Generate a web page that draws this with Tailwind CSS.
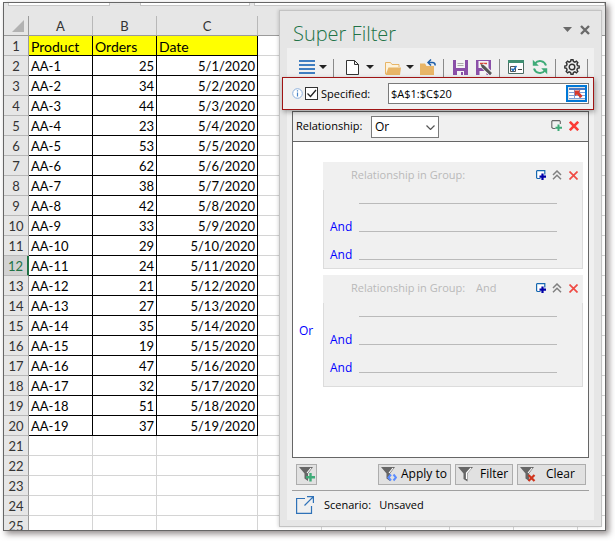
<!DOCTYPE html>
<html lang="en">
<head>
    <meta charset="UTF-8">
    <meta name="viewport" content="width=device-width, initial-scale=1.0">
    <title>Super Filter</title>
    <script src="https://cdn.jsdelivr.net/npm/@tailwindcss/browser@4"></script>
</head>
<body class="bg-white text-black font-['Open_Sans','Noto_Sans',sans-serif]">
    <div class="h-screen pt-[2px] pl-[3px] pr-[9px] pb-[10px]">
        <div class="relative h-full overflow-hidden border border-[#666] bg-white shadow-[3px_3px_6px_rgba(60,50,50,0.55)]">
            <!-- Formula bar edge -->
            <div class="flex h-[13px] items-start gap-1 bg-[#e6e6e6] pl-1">
                <div class="h-[3px] w-[102px] border border-t-0 border-[#c6c6c6] bg-white"></div>
                <div class="ml-[26px] h-[3px] w-[110px] border border-t-0 border-[#c6c6c6] bg-white"></div>
                <div class="h-[3px] flex-1 border border-t-0 border-[#c6c6c6] bg-white"></div>
            </div>

            <!-- Sheet -->
            <table class="w-[638px] table-fixed border-separate border-spacing-0 text-[13px] leading-[17px] font-['Lato',sans-serif]">
                <colgroup>
                    <col class="w-[25px]"><col class="w-[64px]"><col class="w-[64px]"><col class="w-[101px]">
                    <col class="w-[64px]"><col class="w-[64px]"><col class="w-[64px]"><col class="w-[64px]"><col class="w-[64px]"><col class="w-[64px]">
                </colgroup>
                <thead>
                    <tr class="h-5 bg-[#e6e6e6] text-[#333]">
                        <th class="border-r border-b border-[#9b9b9b] p-0">
                            <svg class="ml-auto mr-1 size-3" viewBox="0 0 12 12"><path d="M12 0v12H0z" fill="#b2b2b2"/></svg>
                        </th>
                        <th class="border-r border-b border-r-[#b8b8b8] border-b-[#9b9b9b] p-0 pt-[2px] font-normal">A</th>
                        <th class="border-r border-b border-r-[#b8b8b8] border-b-[#9b9b9b] p-0 pt-[2px] font-normal">B</th>
                        <th class="border-r border-b border-r-[#b8b8b8] border-b-[#9b9b9b] p-0 pt-[2px] font-normal">C</th>
                        <th class="border-b border-[#9b9b9b] p-0" colspan="6"></th>
                    </tr>
                </thead>
                <tbody id="sheetBody"></tbody>
            </table>

            <!-- Task pane -->
            <div class="absolute top-[7px] right-[3px] bottom-[3px] flex w-[323px] flex-col border border-[#c3c3c3] bg-[#e6e6e6] pr-[7px] pb-[6px] pl-[7px] text-[12px] leading-4 shadow-[-1px_0_3px_rgba(0,0,0,0.15)]">
                <div class="flex h-[37px] items-center pl-[6px]">
                    <h1 class="flex-1 pt-2 text-[20px] leading-7 font-light text-[#217346]">Super Filter</h1>
                    <button aria-label="Pane options" class="mr-2"><svg class="h-[5px] w-[9px]" viewBox="0 0 9 5"><path d="M0 0h9L4.500 5z" fill="#6a6a6a"/></svg></button>
                    <button aria-label="Close pane" class="mr-1"><svg class="size-[10px]" viewBox="0 0 10 10"><path d="M1 1l8 8M9 1L1 9" stroke="#6a6a6a" stroke-width="2.400"/></svg></button>
                </div>

                <div class="flex flex-1 flex-col bg-[#f0f0f0]">
                    <!-- Toolbar -->
                    <div class="flex h-[29px] shrink-0 items-end pl-3">
                        <button aria-label="Menu" class="flex h-5 items-center gap-1">
                            <svg class="size-4" viewBox="0 0 16 16"><path d="M0 2h16M0 6h16M0 10h16M0 14h16" stroke="#3f7dc0" stroke-width="2"/></svg>
                            <svg class="h-1 w-2" viewBox="0 0 8 4"><path d="M0 0h8L4 4z" fill="#222"/></svg>
                        </button>
                        <div class="ml-[6px] h-[18px] w-px bg-[#8a8a8a]"></div>
                        <button aria-label="New" class="ml-[10px] flex h-5 items-center gap-[6px]">
                            <svg class="size-4" viewBox="0 0 16 16"><path d="M2.500 1.500h8l4 4v10h-12zM10.500 1.500v4h4" fill="#fff" stroke="#333"/></svg>
                            <svg class="h-1 w-2" viewBox="0 0 8 4"><path d="M0 0h8L4 4z" fill="#222"/></svg>
                        </button>
                        <button aria-label="Open" class="ml-[11px] flex h-5 items-center gap-[5px]">
                            <svg class="size-4" viewBox="0 0 16 16"><path d="M.5 15V3.500h5l1.500 2h7V8" fill="#fdf3dd" stroke="#e8b567"/><path d="M3.500 8.500H16L15 16H.5z" fill="#e8b567"/></svg>
                            <svg class="h-1 w-2" viewBox="0 0 8 4"><path d="M0 0h8L4 4z" fill="#222"/></svg>
                        </button>
                        <button aria-label="Restore" class="ml-[6px] flex h-5 items-center">
                            <svg class="size-4" viewBox="0 0 16 16"><path d="M0 4.500h5L6.500 7H14v9H0z" fill="#e8b567"/><path d="M8.500 3.500h4c1.800 0 2.700 1 2.700 3" fill="none" stroke="#1f5fa8" stroke-width="1.500"/><path d="M11 .5L8 3.500l3 3" fill="none" stroke="#1f5fa8" stroke-width="1.500"/></svg>
                        </button>
                        <div class="ml-[7px] h-[18px] w-px bg-[#8a8a8a]"></div>
                        <button aria-label="Save" class="ml-[9px] flex h-5 items-center">
                            <svg class="size-4" viewBox="0 0 16 16"><path d="M0 1h15v15H0z" fill="#8a4fa8"/><path d="M3 1h9v8H3z" fill="#f4f4f4"/><path d="M4.500 4.500h6M4.500 6.500h6" stroke="#aaa"/><path d="M4 12h7v4H4z" fill="#f4f4f4"/><path d="M8 13h2v3H8z" fill="#8a4fa8"/></svg>
                        </button>
                        <button aria-label="Save as" class="ml-[7px] flex h-5 items-center">
                            <svg class="size-4" viewBox="0 0 16 16"><path d="M0 1h15v15H0z" fill="#8a4fa8"/><path d="M2.500 2h10v7h-10z" fill="#f4f4f4"/><path d="M4 4.500h7" stroke="#d9483b" stroke-width="1.500"/><path d="M3.500 12h7v4h-7z" fill="#f4f4f4"/><path d="M6 6l9 9" stroke="#f4f4f4" stroke-width="5"/><path d="M5 5.500l3 1L15.500 14 14 15.800 6.200 8.500z" fill="#555" stroke="#444" stroke-width=".6"/></svg>
                        </button>
                        <div class="ml-[7px] h-[18px] w-px bg-[#8a8a8a]"></div>
                        <button aria-label="Options" class="ml-2 flex h-5 items-center">
                            <svg class="size-4" viewBox="0 0 16 16"><path d="M.5 1.500h15v13H.5z" fill="#fff" stroke="#4d6b63"/><path d="M0 1h16v3H0z" fill="#3f8f72"/><path d="M2.500 7.500h5v5h-5z" fill="none" stroke="#555"/><path d="M3.500 9.500l1.500 2 3.500-4.500" fill="none" stroke="#1f6fc0" stroke-width="1.400"/><path d="M10 10.500h4" stroke="#444"/></svg>
                        </button>
                        <button aria-label="Refresh" class="ml-2 flex h-5 items-center">
                            <svg class="size-4" viewBox="0 0 16 16"><path d="M14 6.500C12.500 1.500 6 .5 3 4.500M2 9.500c1.500 5 8 6 11 2" fill="none" stroke="#3fab78" stroke-width="2"/><path d="M.8.8v6h6zM15.200 15.200v-6h-6z" fill="#3fab78"/></svg>
                        </button>
                        <div class="ml-[7px] h-[18px] w-px bg-[#8a8a8a]"></div>
                        <button aria-label="Settings" class="ml-2 flex h-5 items-center">
                            <svg class="size-4" viewBox="0 0 16 16" fill="none" stroke="#333" stroke-width="1.400"><path d="M6.600 2.500L7 .8h2l.4 1.700 1.500.6 1.500-.9 1.400 1.400-.9 1.500.6 1.500 1.700.4v2l-1.700.4-.6 1.500.9 1.500-1.400 1.400-1.500-.9-1.500.6L9 15.200H7l-.4-1.700-1.500-.6-1.500.9-1.400-1.400.9-1.500-.6-1.500L.8 9V7l1.700-.4.6-1.500-.9-1.500 1.400-1.400 1.500.9z"/><circle cx="8" cy="8" r="2.800"/></svg>
                        </button>
                        <div class="ml-[7px] h-[18px] w-px bg-[#8a8a8a]"></div>
                    </div>

                    <!-- Range -->
                    <div class="z-10 -ml-[5px] flex h-[33px] shrink-0 items-center border border-[#a01414] bg-[#f0f0f0] pr-1 pl-[9px] shadow-[1px_2px_5px_rgba(0,0,0,0.35)]">
                        <svg class="size-[11px]" viewBox="0 0 11 11"><circle cx="5.500" cy="5.500" r="4.800" fill="#fff" stroke="#8db0dc"/><path d="M5.500 4.500v4M5.500 2.300v1.300" stroke="#4a86c8" stroke-width="1.200"/></svg>
                        <div class="ml-[2px] grid size-[13px]">
                            <input type="checkbox" id="specified" checked class="peer col-start-1 row-start-1 size-[13px] appearance-none border border-[#333] bg-white">
                            <svg class="pointer-events-none invisible col-start-1 row-start-1 size-[13px] peer-checked:visible" viewBox="0 0 13 13"><path d="M2.500 6.500l3 3 5.500-6.500" fill="none" stroke="#222" stroke-width="1.300"/></svg>
                        </div>
                        <label for="specified" class="w-[70px] shrink-0 pl-[3px] text-[11px]">Specified:</label>
                        <div class="flex h-[21px] min-w-0 flex-1 border border-[#7a7a7a] bg-white">
                            <input type="text" aria-label="Range" value="$A$1:$C$20" class="min-w-0 flex-1 pl-[2px] text-[11px] outline-none">
                            <button aria-label="Select range" class="-my-px mr-px flex w-[21px] items-center justify-center self-center border-2 border-[#0078d7] bg-[#e1e1e1]">
                                <svg class="h-[13px] w-4" viewBox="0 0 16 13"><path d="M0 1h16v11H0z" fill="#fff"/><path d="M0 1h16v2H0z" fill="#4a7ac4"/><path d="M0 5.500h16M0 8.500h16M0 11.500h16M5.500 3v9M10.500 3v9" stroke="#7d9fd6"/><path d="M5.500 3.500h6L10 5l3.500 4-2 2L8 7.500 6 9z" fill="#d8392b"/></svg>
                            </button>
                        </div>
                    </div>

                    <!-- Criteria -->
                    <div class="mx-[5px] mt-px flex flex-1 flex-col border border-[#666] bg-white">
                        <div class="flex h-[30px] shrink-0 items-center border-b border-[#666] bg-[#f0f0f0] pr-[9px] pl-[3px]">
                            <label for="relationship" class="w-[75px] pb-[2px] text-[11px]">Relationship:</label>
                            <div class="relative">
                                <select id="relationship" class="block h-[22px] w-[68px] appearance-none border border-[#7a7a7a] bg-white pl-[3px] text-[12px] leading-4">
                                    <option>Or</option>
                                    <option>And</option>
                                </select>
                                <svg class="pointer-events-none absolute top-[9px] right-1 h-[5px] w-[9px]" viewBox="0 0 9 5"><path d="M.5.5l4 4 4-4" fill="none" stroke="#555" stroke-width="1.200"/></svg>
                            </div>
                            <button aria-label="Add group" class="ml-auto pb-[2px]"><svg class="size-[11px]" viewBox="0 0 11 11"><path d="M4.500 8.500H2L.8 7.500v-6L1.500.6h7l.8.900V4" fill="none" stroke="#666" stroke-width="1.100"/><path d="M7.500 4.500V11M4.500 7.800H11" stroke="#3fab78" stroke-width="2"/></svg></button>
                            <button aria-label="Delete all" class="ml-[7px] pb-[2px]"><svg class="size-[10px]" viewBox="0 0 10 10"><path d="M.8.8l8.400 8.400M9.200.8L.8 9.200" stroke="#fb3b36" stroke-width="2.600"/></svg></button>
                        </div>
                        <div class="flex flex-1 flex-col gap-[6px] pt-5 pr-[5px] pl-[6px]">
                            <div class="flex items-center">
                                <div class="w-6"></div>
                                <div class="flex-1 bg-[#f0f0f0]">
                                    <div class="flex h-7 items-center pr-[5px] pb-[2px] pl-7 text-[#b9b9b9]">
                                        <span class="flex-1 text-[11px]">Relationship in Group:</span>
                                        <button aria-label="Add condition"><svg class="size-[10px]" viewBox="0 0 10 10"><path d="M4.500 8.500H1.300L.6 7.800V1.200L1.200.6h7.600v3.900" fill="#fff" stroke="#1668b0" stroke-width="1.200"/><path d="M6.500 3.500V10M3.500 6.700H10" stroke="#0000a8" stroke-width="2.200"/></svg></button>
                                        <button aria-label="Collapse" class="ml-[6px]"><svg class="size-[10px]" viewBox="0 0 10 10"><path d="M1 5l4-4 4 4M1 9.300l4-4 4 4" fill="none" stroke="#808080" stroke-width="1.500"/></svg></button>
                                        <button aria-label="Delete group" class="ml-[7px]"><svg class="size-[9px]" viewBox="0 0 9 9"><path d="M.5.5l8 8M8.500.5l-8 8" stroke="#ef4b45" stroke-width="1.700"/></svg></button>
                                    </div>
                                    <div class="border-x border-b border-[#dcdcdc] pr-[25px] pb-2 pl-[6px] leading-[10px] text-[#0000ff]">
                                        <div class="flex h-[14px] items-end"><div class="ml-[29px] flex-1 border-b border-[#bababa]"></div></div>
                                        <div class="flex h-7 items-end"><button class="w-[29px] text-left">And</button><div class="flex-1 border-b border-[#bababa]"></div></div>
                                        <div class="flex h-7 items-end"><button class="w-[29px] text-left">And</button><div class="flex-1 border-b border-[#bababa]"></div></div>
                                    </div>
                                </div>
                            </div>
                            <div class="flex items-center">
                                <button class="w-6 text-left text-[#0000ff]">Or</button>
                                <div class="flex-1 bg-[#f0f0f0]">
                                    <div class="flex h-7 items-center pr-[5px] pb-[2px] pl-7 text-[#b9b9b9]">
                                        <span class="flex-1 text-[11px]">Relationship in Group: <span class="ml-2">And</span></span>
                                        <button aria-label="Add condition"><svg class="size-[10px]" viewBox="0 0 10 10"><path d="M4.500 8.500H1.300L.6 7.800V1.200L1.200.6h7.600v3.900" fill="#fff" stroke="#1668b0" stroke-width="1.200"/><path d="M6.500 3.500V10M3.500 6.700H10" stroke="#0000a8" stroke-width="2.200"/></svg></button>
                                        <button aria-label="Collapse" class="ml-[6px]"><svg class="size-[10px]" viewBox="0 0 10 10"><path d="M1 5l4-4 4 4M1 9.300l4-4 4 4" fill="none" stroke="#808080" stroke-width="1.500"/></svg></button>
                                        <button aria-label="Delete group" class="ml-[7px]"><svg class="size-[9px]" viewBox="0 0 9 9"><path d="M.5.5l8 8M8.500.5l-8 8" stroke="#ef4b45" stroke-width="1.700"/></svg></button>
                                    </div>
                                    <div class="border-x border-b border-[#dcdcdc] pr-[25px] pb-[13px] pl-[6px] leading-[10px] text-[#0000ff]">
                                        <div class="flex h-[14px] items-end"><div class="ml-[29px] flex-1 border-b border-[#bababa]"></div></div>
                                        <div class="flex h-7 items-end"><button class="w-[29px] text-left">And</button><div class="flex-1 border-b border-[#bababa]"></div></div>
                                        <div class="flex h-7 items-end"><button class="w-[29px] text-left">And</button><div class="flex-1 border-b border-[#bababa]"></div></div>
                                    </div>
                                </div>
                            </div>
                        </div>
                    </div>

                    <!-- Actions -->
                    <div class="mx-[5px] flex h-[33px] shrink-0 items-center border-b border-[#a0a0a0] pr-[3px] pl-1">
                        <button aria-label="Add to filter" class="flex size-[21px] items-center justify-center border border-[#adadad] bg-[#e1e1e1]">
                            <svg class="size-4" viewBox="0 0 16 16"><path d="M0 1h14L9 7.500V15l-3.500-2.500v-5z" fill="#666"/><path d="M12 2L8 7" stroke="#fff" stroke-width="1.200"/><path d="M11.500 7v8.500M7 11.300h9" stroke="#3fab78" stroke-width="2.400"/></svg>
                        </button>
                        <button class="ml-auto flex h-[21px] w-[73px] items-center gap-1 border border-[#adadad] bg-[#e1e1e1] pl-[2px] whitespace-nowrap">
                            <svg class="size-4 shrink-0" viewBox="0 0 16 16"><path d="M0 1h14L9 7.500V15l-3.500-2.500v-5z" fill="#666"/><path d="M12 2L8 7" stroke="#fff" stroke-width="1.200"/><path d="M10 8.500L7.500 11.500l2.500 3M12.500 8.500l2.500 3-2.500 3" fill="none" stroke="#5b8cff" stroke-width="2"/></svg>
                            Apply to
                        </button>
                        <button class="ml-1 flex h-[21px] w-[58px] items-center gap-[6px] border border-[#adadad] bg-[#e1e1e1] pl-[2px]">
                            <svg class="size-4 shrink-0" viewBox="0 0 16 16"><path d="M0 1h15L9.500 7.500V15.500L5.500 13V7.500z" fill="#666"/><path d="M13 2L8.500 7v6" fill="none" stroke="#fff" stroke-width="1.200"/></svg>
                            Filter
                        </button>
                        <button class="ml-1 flex h-[21px] w-[69px] items-center gap-[10px] border border-[#adadad] bg-[#e1e1e1] pl-[2px]">
                            <svg class="size-4 shrink-0" viewBox="0 0 16 16"><path d="M0 1h14L9 7.500V15l-3.500-2.500v-5z" fill="#666"/><path d="M12 2L8 7" stroke="#fff" stroke-width="1.200"/><path d="M8.500 9l6 6M14.500 9l-6 6" stroke="#d0341c" stroke-width="2.200"/></svg>
                            Clear
                        </button>
                    </div>

                    <!-- Scenario -->
                    <div class="flex h-[29px] shrink-0 items-center pb-[2px] pl-[9px] text-[11px]">
                        <button aria-label="Open scenario"><svg class="size-[18px]" viewBox="0 0 18 18" fill="none" stroke="#2f72b8" stroke-width="1.200"><path d="M9 2.500H.6v14.900h14.900V10M11 .6h6.400V7M17.400.6L8.500 9.500"/></svg></button>
                        <span class="ml-[10px]">Scenario:</span>
                        <span class="ml-2">Unsaved</span>
                    </div>
                </div>
            </div>
        </div>
    </div>

    <script>
        const orders = [25, 34, 44, 23, 53, 62, 38, 42, 33, 29, 24, 21, 27, 35, 19, 47, 32, 51, 37];
        const sheetBody = document.getElementById('sheetBody');

        for (let row = 1; row <= 25; row++) {
            const tr = document.createElement('tr');
            tr.className = 'h-5';
            let cells = row === 12
                ? `<th class="border-r-2 border-b border-r-[#217346] border-b-[#b8b8b8] bg-[#d2d2d2] p-0 pt-[2px] font-normal text-[#217346]">${row}</th>`
                : `<th class="border-r border-b border-r-[#9b9b9b] border-b-[#b8b8b8] bg-[#e6e6e6] p-0 pt-[2px] font-normal text-[#333]">${row}</th>`;

            if (row === 1) {
                ['Product', 'Orders', 'Date'].forEach(name => {
                    cells += `<td class="border-r border-b border-black bg-[#ffff00] p-0 pt-[2px] pl-[2px] text-[14px]">${name}</td>`;
                });
            } else if (row <= 20) {
                cells += `
                    <td class="border-r border-b border-black p-0 pt-[2px] pl-[2px]">AA-${row - 1}</td>
                    <td class="border-r border-b border-black p-0 pt-[2px] pr-[2px] text-right">${orders[row - 2]}</td>
                    <td class="border-r border-b border-black p-0 pt-[2px] pr-[2px] text-right">5/${row - 1}/2020</td>`;
            } else {
                cells += '<td class="border-r border-b border-[#d4d4d4] p-0"></td>'.repeat(3);
            }
            cells += '<td class="border-r border-b border-[#d4d4d4] p-0"></td>'.repeat(6);
            tr.innerHTML = cells;
            sheetBody.appendChild(tr);
        }
    </script>
</body>
</html>
